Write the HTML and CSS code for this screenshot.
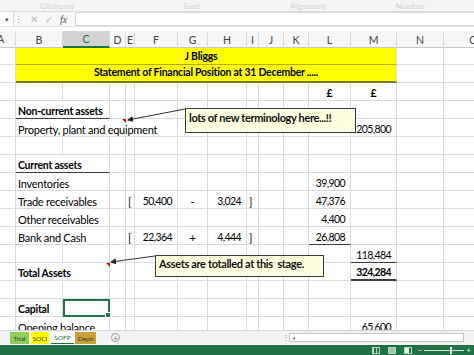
FILE: index.html
```html
<!DOCTYPE html>
<html>
<head>
<meta charset="utf-8">
<link rel="stylesheet" href="styles.css">
</head>
<body>
<div class="app">
  <div class="ribbon">
    <span class="rb rb1">Clipboard</span>
    <span class="rb rb2">Font</span>
    <span class="rb rb3">Alignment</span>
    <span class="rb rb4">Number</span>
  </div>
  <div class="fbar">
    <div class="namebox">▾</div>
    <div class="fdots">⋮</div>
    <div class="fbtn fx-x">✕</div>
    <div class="fbtn fx-ok">✓</div>
    <div class="fbtn fx-fx">fx</div>
    <div class="finput"></div>
  </div>
  <div class="gap"></div>
  <div class="sheet">
    <div class="hdr">
      <span class="a">A</span><span>B</span><span class="act">C</span><span>D</span><span>E</span><span>F</span><span>G</span><span>H</span><span>I</span><span>J</span><span>K</span><span>L</span><span>M</span><span>N</span><span>O</span>
    </div>
    <div class="r r1"><span></span><span class="y y1">J Bliggs</span><span></span><span></span></div>
    <div class="r"><span></span><span class="y y2">Statement of Financial Position at 31 December .....</span><span></span><span></span></div>
    <div class="r"><span></span><span></span><span></span><span></span><span></span><span></span><span></span><span></span><span></span><span></span><span></span><span class="c b">£</span><span class="c b">£</span><span></span><span></span></div>
    <div class="r"><span></span><span class="s2 b bb">Non-current assets</span><span></span><span></span><span></span><span></span><span></span><span></span><span></span><span></span><span></span><span></span><span></span><span></span></div>
    <div class="r"><span></span><span class="s5">Property, plant and equipment</span><span></span><span></span><span></span><span></span><span></span><span></span><span class="n">205,800</span><span></span><span></span></div>
    <div class="r"><span></span><span></span><span></span><span></span><span></span><span></span><span></span><span></span><span></span><span></span><span></span><span></span><span></span><span></span><span></span></div>
    <div class="r"><span></span><span class="s2 b bb">Current assets</span><span></span><span></span><span></span><span></span><span></span><span></span><span></span><span></span><span></span><span></span><span></span><span></span></div>
    <div class="r"><span></span><span class="s2">Inventories</span><span></span><span></span><span></span><span></span><span></span><span></span><span></span><span></span><span class="n">39,900</span><span></span><span></span><span></span></div>
    <div class="r"><span></span><span class="s2">Trade receivables</span><span></span><span class="br">[</span><span class="n">50,400</span><span class="c">-</span><span class="n">3,024</span><span class="br">]</span><span></span><span></span><span class="n">47,376</span><span></span><span></span><span></span></div>
    <div class="r"><span></span><span class="s2">Other receivables</span><span></span><span></span><span></span><span></span><span></span><span></span><span></span><span></span><span class="n">4,400</span><span></span><span></span><span></span></div>
    <div class="r"><span></span><span class="s2">Bank and Cash</span><span></span><span class="br">[</span><span class="n">22,364</span><span class="c">+</span><span class="n">4,444</span><span class="br">]</span><span></span><span></span><span class="n bb">26,808</span><span></span><span></span><span></span></div>
    <div class="r"><span></span><span></span><span></span><span></span><span></span><span></span><span></span><span></span><span></span><span></span><span></span><span></span><span class="n bb">118,484</span><span></span><span></span></div>
    <div class="r"><span></span><span class="s2 b">Total Assets</span><span></span><span></span><span></span><span></span><span></span><span></span><span></span><span></span><span></span><span class="n b bb2">324,284</span><span></span><span></span></div>
    <div class="r"><span></span><span></span><span></span><span></span><span></span><span></span><span></span><span></span><span></span><span></span><span></span><span></span><span></span><span></span><span></span></div>
    <div class="r"><span></span><span class="b">Capital</span><span class="sel"></span><span></span><span></span><span></span><span></span><span></span><span></span><span></span><span></span><span></span><span></span><span></span><span></span></div>
    <div class="r"><span></span><span class="s2">Opening balance</span><span></span><span></span><span></span><span></span><span></span><span></span><span></span><span></span><span></span><span class="n">65,600</span><span></span><span></span></div>

    <svg class="arrows" width="474" height="299" viewBox="0 0 474 299">
      <defs>
        <marker id="ah" markerWidth="6" markerHeight="6" refX="5" refY="3" orient="auto" markerUnits="userSpaceOnUse">
          <path d="M0,0 L6,3 L0,6 Z" fill="#222"/>
        </marker>
      </defs>
      <polygon points="122,88 126,88 126,92" fill="#d00"/>
      <polygon points="106,232 110,232 110,236" fill="#d00"/>
      <line x1="185" y1="78" x2="128" y2="89" stroke="#333" stroke-width="1" marker-end="url(#ah)"/>
      <line x1="155" y1="225" x2="111" y2="231" stroke="#333" stroke-width="1" marker-end="url(#ah)"/>
    </svg>
    <div class="note note1">lots of new terminology here...!!</div>
    <div class="note note2">Assets are totalled at this&nbsp; stage.</div>
  </div>
  <div class="tabs">
    <span class="tab t-trial">Trial</span>
    <span class="tab t-soci">SOCI</span>
    <span class="tab t-sofp">SOFP</span>
    <span class="tab t-depn">Depn</span>
    <span class="addsheet">+</span>
    <span class="tspacer"></span>
    <span class="vdots">⋮</span>
    <span class="hscroll"><span class="harrow">◂</span></span>
  </div>
  <div class="status">
    <span class="vicon v1"></span>
    <span class="vicon v2"></span>
    <span class="vicon v3"></span>
    <span class="zoom">
      <span class="zminus">−</span>
      <span class="ztrack"><span class="zthumb"></span></span>
      <span class="zplus">+</span>
    </span>
  </div>
</div>
</body>
</html>
```

FILE: styles.css
```css
* { box-sizing: border-box; margin: 0; padding: 0; }
html, body { width: 474px; height: 355px; overflow: hidden; background: #fff; }
body { font-family: Lato, "Open Sans", sans-serif; color: #000; }

.app { display: flex; flex-direction: column; height: 355px; }

.ribbon {
  height: 12px; background: #f3f3f3; border-bottom: 1px solid #dadada;
  display: flex; align-items: flex-end; overflow: hidden;
  font-size: 8px; line-height: 10px; color: #d4d4d4;
}
.rb1 { margin-left: 40px; }
.rb2 { margin-left: 110px; }
.rb3 { margin-left: 90px; }
.rb4 { margin-left: 70px; }

.fbar {
  height: 15px; display: flex; align-items: center;
  background: #f7f7f7; border-bottom: 1px solid #e2e2e2;
}
.namebox {
  width: 14px; height: 100%; background: #fff; border-right: 1px solid #dcdcdc;
  display: flex; align-items: center; justify-content: center;
  font-size: 7px; color: #555;
}
.fdots { width: 9px; text-align: center; font-size: 9px; color: #9a9a9a; }
.fbtn { width: 15px; text-align: center; font-size: 10px; color: #b9b9b9; }
.fx-x { margin-left: 3px; }
.fx-fx { font-family: "Liberation Serif", serif; font-style: italic; color: #555; }
.finput {
  flex: 1; height: 14px; margin-left: 4px;
  background: #fff; border: 1px solid #d6d6d6; border-right: none;
}
.gap { height: 4px; }

.sheet { position: relative; height: 299px; overflow: hidden; }

.hdr, .r {
  display: grid;
  grid-template-columns: 16px 47px 47px 16px 9px 43px 30px 39px 12px 25px 25px 42px 46px 47px 60px;
}
.hdr { height: 17px; background: #f6f6f6; border-bottom: 1px solid #c8c8c8; }
.hdr span {
  border-right: 1px solid #d9d9d9;
  display: flex; align-items: center; justify-content: center;
  font-size: 10.5px; color: #444;
}
.hdr .a { display: block; text-indent: -3px; line-height: 17px; }
.hdr .act { background: #d2d2d2; color: #1e6b3c; border-bottom: 2px solid #217346; }

.r { height: 18px; }
.r1 { height: 17px; }
.r span {
  border-right: 1px solid #dadada; border-bottom: 1px solid #dadada;
  display: flex; align-items: flex-end;
  padding: 0 2px 0 2px;
  font-size: 11px; line-height: 13px; letter-spacing: -0.25px; white-space: nowrap;
}
.r .s2 { grid-column: span 2; }
.r .s5 { grid-column: span 5; }
.r .y {
  grid-column: 2 / 14; background: #ffff00; justify-content: center;
  font-weight: 700; font-size: 10.5px;
}
.r .y1 { padding-right: 12px; border-bottom: 1px solid #b0b000; padding-bottom: 1px; }
.r .y2 { border-bottom: 2px solid #7a7a10; padding-bottom: 2px; }
.r .b { font-weight: 700; font-size: 10.5px; }
.r .c { justify-content: center; }
.r .n { justify-content: flex-end; padding-right: 5px; font-size: 10.5px; letter-spacing: -0.6px; }
.r .br { padding-left: 2px; }
.r .bb { border-bottom: 1px solid #3c3c3c; }
.r .bb2 { border-bottom: 2px solid #3c3c3c; }
.r .sel { border: 2px solid #217346; position: relative; }
.r .sel::after {
  content: ""; position: absolute; right: -3px; bottom: -3px;
  width: 4px; height: 4px; background: #217346; border: 1px solid #fff;
}

.arrows { position: absolute; left: 0; top: 0; pointer-events: none; }

.note {
  position: absolute; background: #ffffe1; border: 1px solid #3a3a3a;
  font-weight: 700; font-size: 11px; line-height: 14px; padding: 2px 3px;
  letter-spacing: -0.35px;
  white-space: nowrap; color: #111;
}
.note1 { left: 185px; top: 77px; width: 171px; height: 25px; }
.note2 { left: 155px; top: 224px; width: 169px; height: 22px; padding-top: 1px; }

.tabs {
  height: 15px; display: flex; align-items: flex-start;
  background: #f2f2f2; border-top: 1px solid #d4d4d4;
  padding-left: 10px; padding-top: 1px;
}
.tab {
  height: 12px; display: flex; align-items: center; justify-content: center;
  font-size: 6.5px; color: #333; margin-right: 2px;
}
.t-trial { width: 19px; background: #8fce5a; }
.t-soci { width: 18px; background: #ffff00; }
.t-sofp { width: 23px; background: #fff; color: #1e6b3c; border-bottom: 1px solid #217346; margin-right: 1px; }
.t-depn { width: 21px; background: #c9a136; }
.addsheet {
  width: 9px; height: 9px; margin-left: 13px; margin-top: 1px;
  border: 1px solid #9a9a9a; border-radius: 50%;
  display: flex; align-items: center; justify-content: center;
  font-size: 8px; line-height: 8px; color: #777;
}
.tspacer { flex: 1; }
.vdots { width: 7px; font-size: 8px; color: #999; line-height: 11px; }
.hscroll {
  width: 175px; height: 9px; margin-top: 1px; margin-right: 10px;
  background: #fff; border: 1px solid #c6c6c6;
  display: flex; align-items: center;
}
.harrow { font-size: 6px; color: #888; margin-left: 2px; }

.status {
  height: 10px; background: #217346;
  display: flex; align-items: center; justify-content: flex-end;
  padding-right: 3px;
}
.vicon { width: 8px; height: 7px; margin-right: 8px; border: 1px solid #b9d6c3; }
.v1 { background: repeating-linear-gradient(90deg, #b9d6c3 0 1px, transparent 1px 3px); }
.v2 { background: #9fc4ac; }
.v3 { background: linear-gradient(90deg, #e8f2ec 0 4px, transparent 4px); margin-right: 6px; }
.zoom { display: flex; align-items: center; color: #e8f2ec; font-size: 8px; }
.ztrack { width: 40px; height: 1px; background: #cfe2d6; margin: 0 2px; position: relative; }
.zthumb { position: absolute; left: 26px; top: -3px; width: 2px; height: 7px; background: #fff; }
```
